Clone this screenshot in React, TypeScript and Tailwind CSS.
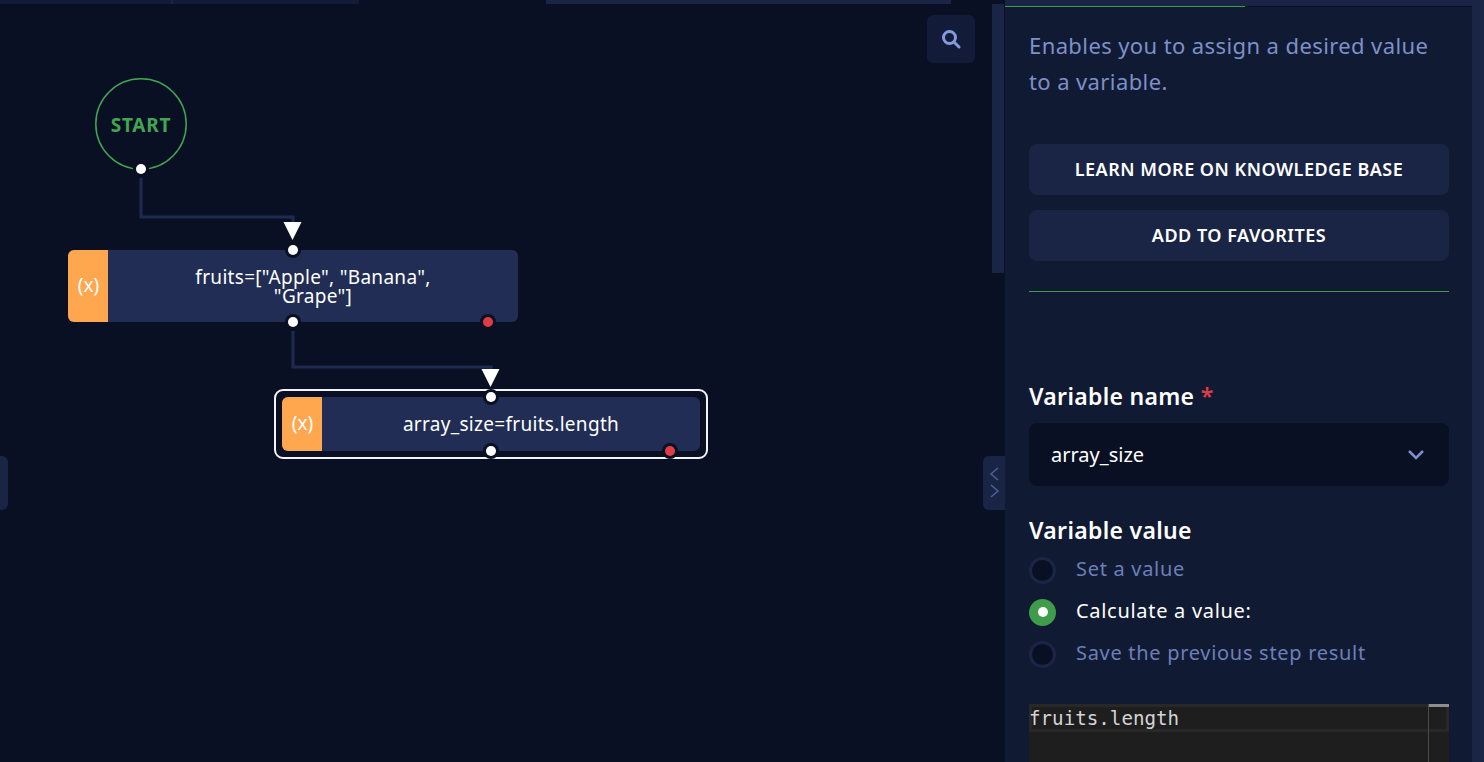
const font = { fontFamily: '"Noto Sans", sans-serif' };

function Port({ x, y, color = "bg-white", size = "w-[10px] h-[10px]" }: { x: number; y: number; color?: string; size?: string }) {
  return (
    <div className="absolute w-[16px] h-[16px] rounded-full bg-[#0a1024] flex items-center justify-center -translate-x-1/2 -translate-y-1/2" style={{ left: x, top: y }}>
      <div className={`rounded-full ${color} ${size}`} />
    </div>
  );
}

function Node({ x, y, w, h, text }: { x: number; y: number; w: number; h: number; text: React.ReactNode }) {
  return (
    <div className="absolute flex rounded-[6px] overflow-hidden bg-[#212d54]" style={{ left: x, top: y, width: w, height: h }}>
      <div className="w-[40px] shrink-0 bg-[#ffa74f] text-white flex items-center justify-center text-[19px] pb-[2px] pl-[1px]">(x)</div>
      <div className="flex-1 flex items-center justify-center text-center text-white text-[19px] tracking-[0.3px] leading-[19px] px-[30px] pt-[1px]">{text}</div>
    </div>
  );
}

function Radio({ label, on }: { label: string; on?: boolean }) {
  return (
    <div className="flex items-center h-[42px] gap-[20px]">
      {on ? (
        <div className="w-[27px] h-[27px] rounded-full bg-[#3e9c4b] flex items-center justify-center">
          <div className="w-[10px] h-[10px] rounded-full bg-white" />
        </div>
      ) : (
        <div className="w-[27px] h-[27px] rounded-full bg-[#0a1024] border-[3px] border-[#1b2646]" />
      )}
      <span className={`text-[20px] tracking-[0.7px] pb-[2px] ${on ? "text-white" : "text-[#6d7fb8]"}`}>{label}</span>
    </div>
  );
}

export default function App() {
  return (
    <div className="flex w-[1484px] h-[762px] overflow-hidden bg-[#0a1024]" style={font}>
      {/* Canvas */}
      <div className="relative w-[1005px] h-full shrink-0 bg-[#0a1024]">
        <div className="flex h-[4px] w-[951px]">
          <div className="w-[171px] bg-[#121b37]" />
          <div className="w-[2px] bg-[#1a2545]" />
          <div className="w-[186px] bg-[#121b37]" />
          <div className="w-[187px]" />
          <div className="flex-1 bg-[#1a2545]" />
        </div>

        <svg className="absolute left-0 top-0" width="1005" height="762">
          <circle cx="141" cy="124" r="45.2" fill="none" stroke="#41a650" strokeWidth="1.5" />
          <path d="M141 178 V217 H293 V224" fill="none" stroke="#1f2a50" strokeWidth="3" />
          <path d="M293 331 V367 H491 V372" fill="none" stroke="#1f2a50" strokeWidth="3" />
          <path d="M283.5 222 H301.5 L292.5 240 Z" fill="#fff" />
          <path d="M481.5 369 H499.5 L490.5 387 Z" fill="#fff" />
        </svg>

        <div className="absolute left-[95px] top-[78px] w-[92px] h-[92px] flex items-center justify-center">
          <span className="text-[#41a650] font-bold text-[19px] tracking-[0.8px] pt-[2px]">START</span>
        </div>
        <Port x={141} y={169} />

        <Node x={68} y={250} w={450} h={72} text={<>fruits=["Apple", "Banana",<br />"Grape"]</>} />
        <Port x={293} y={250} />
        <Port x={293} y={322} />
        <Port x={488} y={322} color="bg-[#e03c46]" />

        <div className="absolute left-[274px] top-[389px] w-[434px] h-[70px] rounded-[9px] border-2 border-[#f4f5f8]" />
        <Node x={282} y={397} w={418} h={54} text="array_size=fruits.length" />
        <Port x={491} y={397} />
        <Port x={491} y={451} />
        <Port x={670} y={451} color="bg-[#e03c46]" />

        <div className="absolute left-[927px] top-[15px] w-[48px] h-[48px] rounded-[6px] bg-[#121b37] flex items-center justify-center">
          <svg width="20" height="20" viewBox="0 0 20 20" fill="none" stroke="#8399dc" strokeWidth="3">
            <circle cx="8.5" cy="8.5" r="6" />
            <path d="M13 13 L18 18" strokeLinecap="round" />
          </svg>
        </div>

        <div className="absolute left-0 top-[456px] w-[8px] h-[54px] rounded-r-[6px] bg-[#1a2545]" />

        <div className="absolute left-[983px] top-[456px] w-[22px] h-[54px] rounded-l-[6px] bg-[#1a2545] flex items-center justify-center">
          <svg width="12" height="34" viewBox="0 0 12 34" fill="none" stroke="#4f5f9a" strokeWidth="1.5">
            <path d="M10 2 L3 8 L10 14" />
            <path d="M3 19 L10 25 L3 31" />
          </svg>
        </div>

        <div className="absolute left-[992px] top-[4px] w-[12px] h-[269px] bg-[#1a2545]" />
      </div>

      {/* Panel */}
      <div className="w-[467px] h-full shrink-0 bg-[#111a33]">
        <div className="flex h-[7px]">
          <div className="w-[240px] bg-[#1a2545] border-b border-[#3e9c4b]" />
          <div className="flex-1 bg-[#1a2545] border-b border-[#0a1024]" />
        </div>
        <div className="pl-[24px] pr-[23px]">
          <p className="text-[22px] tracking-[0.4px] leading-[36px] text-[#7e90c8] mt-[20px]">Enables you to assign a desired value to a variable.</p>
          <button className="w-full h-[51px] mt-[45px] rounded-[8px] bg-[#1a2545] text-white font-semibold text-[18px] tracking-[0.5px]">LEARN MORE ON KNOWLEDGE BASE</button>
          <button className="w-full h-[51px] mt-[15px] rounded-[8px] bg-[#1a2545] text-white font-semibold text-[18px] tracking-[0.5px]">ADD TO FAVORITES</button>
          <div className="h-px bg-[#3e9c4b] mt-[30px]" />
          <div className="mt-[89px] text-white font-semibold text-[23px] tracking-[0.3px] leading-[30px]">Variable name <span className="text-[#e03c46]">*</span></div>
          <div className="mt-[12px] h-[63px] rounded-[8px] bg-[#0a1024] flex items-center justify-between pl-[22px] pr-[24px]">
            <span className="text-white text-[20px]">array_size</span>
            <svg width="18" height="12" viewBox="0 0 18 12" fill="none" stroke="#7e90c8" strokeWidth="2.5"><path d="M2 2 L9 9 L16 2" /></svg>
          </div>
          <div className="mt-[29px] text-white font-semibold text-[23px] tracking-[0.3px] leading-[30px]">Variable value</div>
          <div className="mt-[4px]">
            <Radio label="Set a value" />
            <Radio label="Calculate a value:" on />
            <Radio label="Save the previous step result" />
          </div>
          <div className="relative mt-[29px] h-[58px] bg-[#1e1e1e] overflow-hidden">
            <div className="h-[28px] border-[3px] border-[#282828] text-[#d4d4d4] text-[19.2px] leading-[24px] whitespace-nowrap" style={{ fontFamily: '"DejaVu Sans Mono", monospace' }}>
              <span className="-ml-[3px] block">fruits.length</span>
            </div>
            <div className="absolute right-[20px] top-0 bottom-0 w-px bg-[#4a4a4a]" />
            <div className="absolute right-0 top-0 w-[20px] h-[3px] bg-[#8f8f8f]" />
          </div>
        </div>
      </div>
      <div className="w-[12px] h-full shrink-0 bg-[#1a2545]" />
    </div>
  );
}
